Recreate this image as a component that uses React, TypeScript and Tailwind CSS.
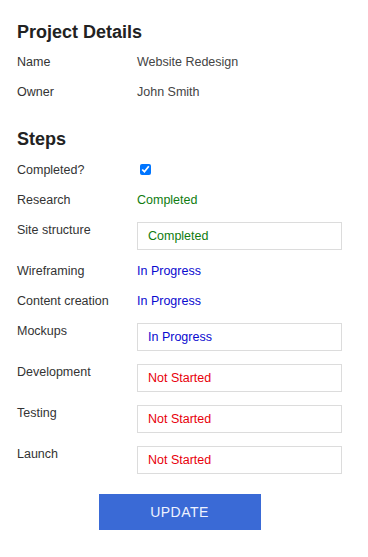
import React from 'react';

type Status = 'Completed' | 'In Progress' | 'Not Started';

const statusColor: Record<Status, string> = {
  Completed: 'text-[#107c10]',
  'In Progress': 'text-[#0a0ad0]',
  'Not Started': 'text-[#e8000b]',
};

const steps: { name: string; status: Status; boxed: boolean }[] = [
  { name: 'Research', status: 'Completed', boxed: false },
  { name: 'Site structure', status: 'Completed', boxed: true },
  { name: 'Wireframing', status: 'In Progress', boxed: false },
  { name: 'Content creation', status: 'In Progress', boxed: false },
  { name: 'Mockups', status: 'In Progress', boxed: true },
  { name: 'Development', status: 'Not Started', boxed: true },
  { name: 'Testing', status: 'Not Started', boxed: true },
  { name: 'Launch', status: 'Not Started', boxed: true },
];

const Row = ({ label, children }: { label: string; children: React.ReactNode }) => (
  <div className="flex items-start">
    <div className="w-[120px] shrink-0 leading-[18px] text-[#333]">{label}</div>
    <div className="flex-1 leading-[18px]">{children}</div>
  </div>
);

export default function App() {
  return (
    <div className="min-h-[557px] bg-white font-['Liberation_Sans',Arial,sans-serif] text-[12.5px]">
      <div className="w-[325px] ml-[17px] pt-[22px] pb-6">
        <h2 className="text-[18px] font-bold leading-[21px] text-[#222] mb-[10px]">Project Details</h2>
        <div className="flex flex-col gap-3">
          <Row label="Name">
            <span className="text-[#444]">Website Redesign</span>
          </Row>
          <Row label="Owner">
            <span className="text-[#444]">John Smith</span>
          </Row>
        </div>

        <h2 className="text-[18px] font-bold leading-[21px] text-[#222] mt-[28px] mb-[10px]">Steps</h2>
        <div className="flex flex-col gap-3">
          <div className="flex items-center h-[19px]">
            <div className="w-[120px] shrink-0 leading-[18px] text-[#333]">Completed?</div>
            <input
              type="checkbox"
              defaultChecked
              className="ml-[3px] w-[11px] h-[11px] accent-[#0075ff]"
            />
          </div>
          {steps.map((step) =>
            step.boxed ? (
              <Row key={step.name} label={step.name}>
                <div
                  className={`mt-px h-[28px] border border-[#dcdcdc] pl-[10px] flex items-center ${statusColor[step.status]}`}
                >
                  {step.status}
                </div>
              </Row>
            ) : (
              <Row key={step.name} label={step.name}>
                <span className={statusColor[step.status]}>{step.status}</span>
              </Row>
            )
          )}
        </div>

        <div className="flex justify-center mt-[20px]">
          <button className="w-[162px] h-[36px] bg-[#3a6ad6] text-[#eef3ff] text-[14px] tracking-[0.5px]">
            UPDATE
          </button>
        </div>
      </div>
    </div>
  );
}
